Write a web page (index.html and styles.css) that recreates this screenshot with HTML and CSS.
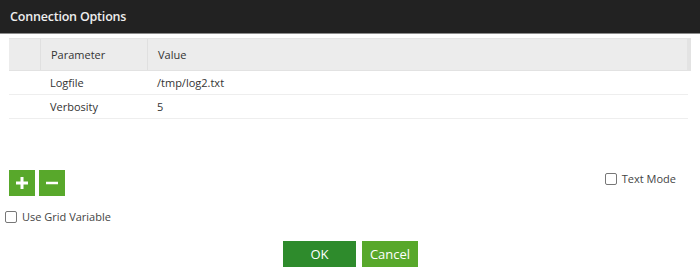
FILE: index.html
```html
<!DOCTYPE html>
<html lang="en">
<head>
	<meta charset="UTF-8">
	<title>Connection Options</title>
	<link rel="stylesheet" href="styles.css">
</head>
<body>
	<div class="dialog-header">Connection Options</div>

	<div class="grid">
		<div class="grid-head">
			<div class="cell"></div>
			<div class="cell">Parameter</div>
			<div class="cell">Value</div>
			<div class="filler"></div>
		</div>
		<div class="grid-row">
			<div class="cell"></div>
			<div class="cell">Logfile</div>
			<div class="cell">/tmp/log2.txt</div>
		</div>
		<div class="grid-row">
			<div class="cell"></div>
			<div class="cell">Verbosity</div>
			<div class="cell">5</div>
		</div>
	</div>

	<div class="toolbar">
		<div class="row-buttons">
			<button class="icon-btn" title="Add">
				<svg width="14" height="14" viewBox="0 0 14 14"><path d="M7 1v12M1 7h12" stroke="#fff" stroke-width="3"/></svg>
			</button>
			<button class="icon-btn" title="Remove">
				<svg width="14" height="14" viewBox="0 0 14 14"><path d="M1 7h12" stroke="#fff" stroke-width="2.5"/></svg>
			</button>
		</div>
		<label class="check text-mode"><input type="checkbox"> Text Mode</label>
	</div>

	<label class="check grid-var"><input type="checkbox"> Use Grid Variable</label>

	<div class="actions">
		<button class="btn btn-ok">OK</button>
		<button class="btn btn-cancel">Cancel</button>
	</div>
</body>
</html>
```

FILE: styles.css
```css
:root {
	--green: #58a82b;
	--green-dark: #2e8b2c;
	--text-color: #333;
	--head-bg: #ececec;
	--line: #e6e6e6;
}

body {
	margin: 0;
	font-family: "Open Sans", Arial, sans-serif;
	font-size: 11px;
	color: var(--text-color);
	background: #fff;
}

.dialog-header {
	height: 33px;
	line-height: 33px;
	padding: 0 10px;
	background: #222;
	border-bottom: 1px solid #8c8c8c;
	color: #eee;
	font-size: 12.5px;
	font-weight: 600;
	letter-spacing: -0.2px;
}

.grid {
	height: 122px;
	margin: 4px 0 0 9px;
	width: 682px;
}

.grid-head,
.grid-row {
	display: grid;
	grid-template-columns: 31px 107px 1fr;
}

.grid-head {
	grid-template-columns: 31px 107px 1fr 4px;
	height: 31px;
	background: var(--head-bg);
	border-top: 1px solid #e4e4e4;
	border-bottom: 1px solid #e2e2e2;
}

.grid-head .cell {
	line-height: 31px;
}

.grid-head .cell + .cell {
	border-left: 1px solid #e0e0e0;
}

.grid-head .filler {
	background: #e3e3e3;
}

.grid-row {
	width: 679px;
	height: 23px;
	border-bottom: 1px solid #eee;
}

.grid-row .cell {
	line-height: 23px;
}

.cell + .cell {
	padding-left: 10px;
}

.toolbar {
	display: flex;
	justify-content: space-between;
	align-items: flex-start;
	margin-top: 10px;
	padding: 0 24px 0 9px;
}

.row-buttons {
	display: flex;
	gap: 4px;
}

.icon-btn {
	width: 26px;
	height: 26px;
	padding: 0;
	border: none;
	background: var(--green);
	display: flex;
	align-items: center;
	justify-content: center;
}

.check {
	display: flex;
	align-items: center;
	gap: 5px;
	font-size: 11px;
	color: #444;
}

.check input {
	appearance: none;
	width: 12px;
	height: 12px;
	margin: 0;
	border: 1px solid #777;
	border-radius: 2px;
	background: #fff;
}

.text-mode {
	margin-top: 1px;
}

.grid-var {
	margin: 13px 0 0 5px;
}

.actions {
	display: flex;
	justify-content: center;
	gap: 6px;
	margin-top: 17px;
	padding-left: 1px;
}

.btn {
	height: 26px;
	border: none;
	color: #fff;
	font-family: "Open Sans", Arial, sans-serif;
	font-size: 13px;
	padding: 0;
}

.btn-ok {
	width: 73px;
	background: var(--green-dark);
}

.btn-cancel {
	width: 56px;
	background: var(--green);
}
```
